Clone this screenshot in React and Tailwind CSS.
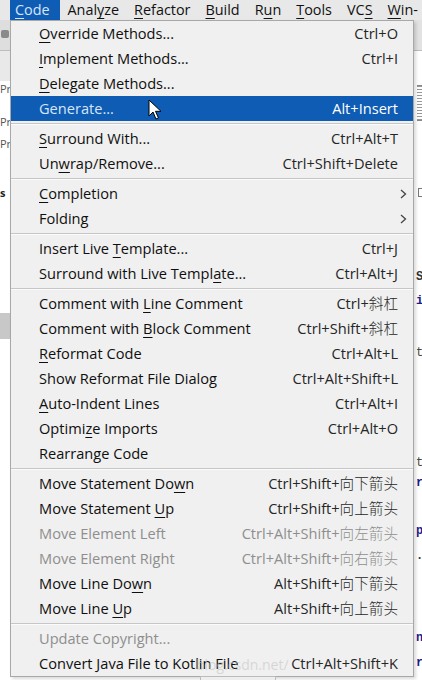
import React from "react";

const FONT = { fontFamily: '"Open Sans", "Noto Sans CJK SC", sans-serif' };

function U({ children }) {
  return <span className="underline underline-offset-[3px] decoration-1">{children}</span>;
}

function Label({ text, u }) {
  if (u === undefined || u < 0) return <span>{text}</span>;
  return (
    <span>
      {text.slice(0, u)}
      <U>{text[u]}</U>
      {text.slice(u + 1)}
    </span>
  );
}

function Shortcut({ k, className }) {
  const m = k.match(/^([^\u4e00-\u9fff]*)([\u4e00-\u9fff]*)$/);
  const latin = m ? m[1] : k;
  const cjk = m ? m[2] : "";
  return (
    <span className={className}>
      {latin}
      {cjk && <span className="font-[300]">{cjk}</span>}
    </span>
  );
}

const items = [
  { t: "Override Methods...", u: 0, k: "Ctrl+O" },
  { t: "Implement Methods...", u: 0, k: "Ctrl+I" },
  { t: "Delegate Methods...", u: 0 },
  { t: "Generate...", k: "Alt+Insert", sel: true },
  "sep",
  { t: "Surround With...", u: 0, k: "Ctrl+Alt+T" },
  { t: "Unwrap/Remove...", u: 2, k: "Ctrl+Shift+Delete" },
  "sep",
  { t: "Completion", u: 0, sub: true },
  { t: "Folding", sub: true },
  "sep",
  { t: "Insert Live Template...", u: 12, k: "Ctrl+J" },
  { t: "Surround with Live Template...", u: 24, k: "Ctrl+Alt+J" },
  "sep",
  { t: "Comment with Line Comment", u: 13, k: "Ctrl+斜杠" },
  { t: "Comment with Block Comment", u: 13, k: "Ctrl+Shift+斜杠" },
  { t: "Reformat Code", u: 0, k: "Ctrl+Alt+L" },
  { t: "Show Reformat File Dialog", k: "Ctrl+Alt+Shift+L" },
  { t: "Auto-Indent Lines", u: 0, k: "Ctrl+Alt+I" },
  { t: "Optimize Imports", u: 6, k: "Ctrl+Alt+O" },
  { t: "Rearrange Code" },
  "sep",
  { t: "Move Statement Down", u: 17, k: "Ctrl+Shift+向下箭头" },
  { t: "Move Statement Up", u: 15, k: "Ctrl+Shift+向上箭头" },
  { t: "Move Element Left", k: "Ctrl+Alt+Shift+向左箭头", dis: true },
  { t: "Move Element Right", k: "Ctrl+Alt+Shift+向右箭头", dis: true },
  { t: "Move Line Down", u: 12, k: "Alt+Shift+向下箭头" },
  { t: "Move Line Up", u: 10, k: "Alt+Shift+向上箭头" },
  "sep",
  { t: "Update Copyright...", dis: true },
  { t: "Convert Java File to Kotlin File", k: "Ctrl+Alt+Shift+K" },
];

function Row({ it }) {
  const base = it.sel
    ? "bg-[#0e5cb3] text-[#d6e6fa]"
    : it.dis
    ? "text-[#8e8e8e]"
    : "text-[#0f0f0f]";
  return (
    <div className={`relative flex h-[25px] items-center justify-between pl-[28px] pr-[15px] ${base}`}>
      <Label text={it.t} u={it.u} />
      {it.k && (
        <Shortcut
          k={it.k}
          className={it.sel ? "text-white" : it.dis ? "text-[#8e8e8e]" : "text-[#262626]"}
        />
      )}
      {it.sub && (
        <svg className="absolute right-[6px] top-[8px]" width="7" height="10" viewBox="0 0 7 10">
          <path d="M1 1 L5.5 5 L1 9" fill="none" stroke="#444" strokeWidth="1.3" />
        </svg>
      )}
    </div>
  );
}

function Sep() {
  return (
    <div className="flex h-[5px] flex-col justify-center">
      <div className="h-px bg-[#c6c6c6]" />
      <div className="h-px bg-[#fbfbfb]" />
    </div>
  );
}

function Cursor() {
  return (
    <svg className="absolute left-[148px] top-[99px]" width="14" height="22" viewBox="0 0 14 22">
      <path
        d="M1 1 L1 17 L5 13 L8 20 L10.5 19 L7.5 12.3 L13 12.3 Z"
        fill="#fff"
        stroke="#000"
        strokeWidth="1"
        strokeLinejoin="round"
      />
    </svg>
  );
}

const menubar = [
  { t: "Code", u: 0, sel: true },
  { t: "Analyze", u: 4 },
  { t: "Refactor", u: 0 },
  { t: "Build", u: 0 },
  { t: "Run", u: 1 },
  { t: "Tools", u: 0 },
  { t: "VCS", u: 2 },
  { t: "Win-", u: 0 },
];

export default function App() {
  return (
    <div className="relative h-[680px] w-[422px] overflow-hidden bg-white text-[14.6px] font-[500]" style={FONT}>
      {/* menu bar */}
      <div className="flex h-[20px] items-center overflow-hidden bg-[#e8e8e8] pl-[10px] text-[14.4px] text-[#111]">
        {menubar.map((m, i) => (
          <div
            key={i}
            className={`flex h-[20px] shrink-0 items-center ${
              m.sel ? "w-[50px] bg-[#0e5cb3] pl-[5px] text-[#d6e6fa]" : "px-[7.5px]"
            }`}
          >
            <Label text={m.t} u={m.u} />
          </div>
        ))}
      </div>

      {/* IDE background fragments */}
      <div className="flex h-[660px]">
        <div className="flex w-[10px] flex-col">
          <div className="relative h-[30px] bg-[#dedede]">
            <div className="absolute left-[1px] top-[10px] h-[8px] w-[8px] rounded-[2px] bg-[#8a8a8a]" />
          </div>
          <div className="h-px bg-[#bdbdbd]" />
          <div className="h-[30px] bg-[#e9e9e9]" />
          <div className="relative flex-1 bg-white text-[11px] text-[#555]">
            <span className="absolute left-0 top-0">Pr</span>
            <span className="absolute left-0 top-[33px]">Pr</span>
            <span className="absolute left-0 top-[55px]">Pr</span>
            <span className="absolute left-0 top-[104px] font-bold text-[#222]">s</span>
            <div className="absolute left-0 top-[232px] h-[26px] w-[10px] bg-[#c8c8c8]" />
          </div>
        </div>
        <div className="w-[404px]" />
        <div className="flex w-[8px] flex-col">
          <div className="h-[30px] bg-[#e2e2e2]" />
          <div className="h-px bg-[#bdbdbd]" />
          <div className="relative flex-1 bg-white font-mono text-[12px] font-bold text-[#1c1c8c]">
            <div className="absolute left-[3px] top-[34px] h-[36px] w-[5px] border-y border-[#888] bg-[repeating-linear-gradient(0deg,#999_0px,#999_1px,#fff_1px,#fff_3px)]" />
            <div className="absolute left-[4px] top-[137px] h-[9px] w-[6px] border border-[#777]" />
            <span className="absolute left-[2px] top-[217px] text-[#333]">S</span>
            <span className="absolute left-[2px] top-[241px]">i</span>
            <span className="absolute left-[2px] top-[293px] font-normal text-[#444]">t</span>
            <span className="absolute left-[2px] top-[403px] font-normal text-[#444]">t</span>
            <span className="absolute left-[2px] top-[423px]">r</span>
            <span className="absolute left-[2px] top-[471px]">p</span>
            <span className="absolute left-[2px] top-[496px] text-[#333]">.</span>
            <span className="absolute left-[2px] top-[578px]">n</span>
            <span className="absolute left-[2px] top-[603px]">r</span>
          </div>
        </div>
      </div>

      {/* dropdown menu */}
      <div className="absolute left-[10px] top-[20px] w-[404px] border border-[#a8a8a8] bg-[#f0f0f0] shadow-[2px_2px_3px_rgba(0,0,0,0.15)]">
        {items.map((it, i) => (it === "sep" ? <Sep key={i} /> : <Row key={i} it={it} />))}
        <div className="pointer-events-none absolute left-[185px] top-[633px] text-[14px] font-normal text-[#c4c4c4]/60">
          blog.csdn.net/
        </div>
      </div>
      <Cursor />
      <div className="absolute left-[200px] top-[676px] h-[4px] w-[76px] border-x border-t border-[#bbb] bg-[#eee]" />
    </div>
  );
}
